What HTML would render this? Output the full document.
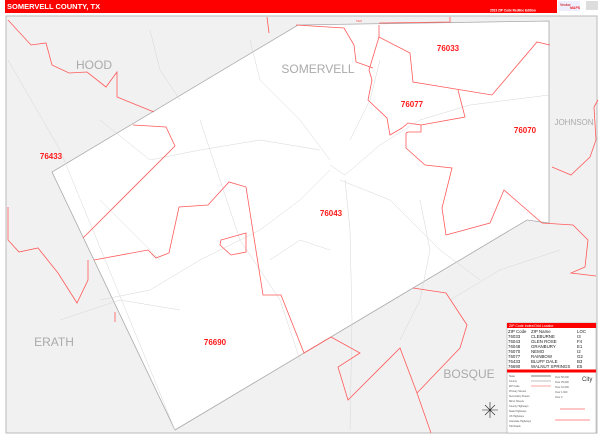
<!DOCTYPE html>
<html><head><meta charset="utf-8"><style>
html,body{margin:0;padding:0;width:600px;height:435px;overflow:hidden;background:#fff;font-family:"Liberation Sans",sans-serif}
svg{position:absolute;left:0;top:0}
</style></head><body>
<svg width="600" height="435" viewBox="0 0 600 435" xmlns="http://www.w3.org/2000/svg" font-family="Liberation Sans, sans-serif">
<rect x="0" y="0" width="600" height="435" fill="#fff"/>
<rect x="5" y="0" width="552" height="13" fill="#ff0000"/>
<text x="7" y="9" font-size="7.5" font-weight="bold" fill="#fff">SOMERVELL COUNTY, TX</text>
<text x="490" y="11.5" font-size="3.2" font-weight="bold" fill="#fff">2023 ZIP Code Redline Edition</text>
<rect x="558" y="1" width="22" height="10" fill="#eef"/>
<text x="560" y="6" font-size="3.5" fill="#c33" font-weight="bold">Vector</text>
<text x="570" y="9" font-size="3.5" fill="#e22" font-weight="bold">MAPS</text>
<rect x="586" y="1" width="12" height="9" fill="#ddd"/>
<rect x="6" y="16" width="591" height="417" fill="#f1f1f1" stroke="#bbb" stroke-width="1"/>
<polygon points="298,25 549,21 549,223 527,220 175,430 52,172" fill="#fff" stroke="#aaa" stroke-width="0.8"/>
<g stroke="#d6d6d6" stroke-width="0.5" fill="none">
<path d="M330,165 L345,175 L380,145 L420,120 L470,105 L549,95"/>
<path d="M345,180 L350,230 L352,320 L350,430"/>
<path d="M8,60 L60,150 L175,430"/>
<path d="M100,120 L150,160 L200,150 L260,140 L320,150"/>
<path d="M330,170 L300,200 L260,230 L200,260 L150,290 L100,300"/>
<path d="M340,180 L390,200 L440,250 L480,280"/>
<path d="M250,40 L260,80 L300,120 L330,160"/>
<path d="M200,120 L220,180 L240,240 L280,300 L300,360"/>
<path d="M380,60 L370,100 L350,140"/>
<path d="M420,200 L430,250 L420,300 L400,340"/>
<path d="M60,320 L120,300 L180,310"/>
<path d="M450,300 L500,270 L560,250"/>
<path d="M150,30 L160,70 L180,100"/>
<path d="M270,260 L300,240 L330,250"/>
<path d="M100,200 L130,230 L160,260"/>
</g>
<g stroke="#ff5a5a" stroke-width="0.8" fill="none">
<polyline points="8,20 31,45 46,43 52,65 69,73 87,72 106,87 117,72 117,97 154,112"/>
<polyline points="133,125 166,127 175,146 83,238"/>
<polyline points="94,260 148,250 156,258 169,253 179,207 208,205 229,182 246,187 263,295 281,295 304,353 331,337"/>
<polygon points="221,240 246,233 246,252 231,255 220,245"/>
<polyline points="406,133 406,148 425,165 452,168 442,208 446,235 490,223 504,190 542,223"/>
<polyline points="379,25 379,37 369,70 372,80 368,100 387,118 390,135 402,128 408,123 421,125 421,132 408,132 406,133"/>
<polyline points="458,90 465,117 421,125"/>
<polyline points="379,37 410,53 413,82 492,95 537,42 550,45"/>
<polyline points="267,17 269,33"/>
<polyline points="296,25 344,28 354,45 356,62 373,68"/>
<polyline points="379,23 450,22 450,17"/>
<polyline points="598,100 594,107 596,140 590,157 571,175 552,167"/>
<polyline points="542,223 573,225 588,240 585,267 571,273 596,276"/>
<polyline points="8,207 8,240 19,252 38,248 58,273 77,303 88,280 88,260"/>
<polyline points="115,312 115,322"/>
<polyline points="413,288 446,293 467,325 460,348 417,393"/>
<polyline points="331,337 360,353 338,367 348,400 400,348 417,393 431,433"/>
</g>
<g fill="#aaa" font-size="12">
<text x="94" y="69" text-anchor="middle">HOOD</text>
<text x="318" y="73" text-anchor="middle">SOMERVELL</text>
<text x="54" y="346" text-anchor="middle">ERATH</text>
<text x="469" y="378" text-anchor="middle">BOSQUE</text>
<text x="574" y="125" text-anchor="middle" font-size="8">JOHNSON</text>
</g>
<g fill="#ff1a1a" font-size="8" font-weight="bold" text-anchor="middle">
<text x="448" y="51">76033</text>
<text x="412" y="107">76077</text>
<text x="525" y="133">76070</text>
<text x="51" y="159">76433</text>
<text x="331" y="216">76043</text>
<text x="215" y="345">76690</text>
</g>
<text x="356" y="22" font-size="3" fill="#f33">TAN</text>
<g stroke="#222" stroke-width="0.6">
<path d="M490,402 L490,418 M482,410 L498,410 M485,405 L495,415 M495,405 L485,415"/>
</g>
<rect x="507" y="323" width="89" height="110" fill="#fff" stroke="#999" stroke-width="0.5"/>
<rect x="507" y="323" width="89" height="5" fill="#ff0000"/>
<text x="509" y="327" font-size="3.5" fill="#fff">ZIP Code Index/Grid Locator</text>
<g font-size="4.4" fill="#222">
<text x="508" y="333">ZIP Code</text><text x="531" y="333">ZIP Name</text><text x="577" y="333">LOC</text>
<text x="508" y="338">76033</text><text x="531" y="338">CLEBURNE</text><text x="577" y="338">I3</text>
<text x="508" y="343">76043</text><text x="531" y="343">GLEN ROSE</text><text x="577" y="343">F4</text>
<text x="508" y="348">76048</text><text x="531" y="348">GRANBURY</text><text x="577" y="348">E1</text>
<text x="508" y="353">76070</text><text x="531" y="353">NEMO</text><text x="577" y="353">I2</text>
<text x="508" y="358">76077</text><text x="531" y="358">RAINBOW</text><text x="577" y="358">G2</text>
<text x="508" y="363">76433</text><text x="531" y="363">BLUFF DALE</text><text x="577" y="363">B3</text>
<text x="508" y="368">76690</text><text x="531" y="368">WALNUT SPRINGS</text><text x="577" y="368">E5</text>
</g>
<rect x="507" y="369.5" width="89" height="3" fill="#ff0000"/>
<g font-size="2.5" fill="#555">
<text x="509" y="377">State</text><text x="509" y="382">County</text><text x="509" y="387">ZIP Code</text>
<text x="509" y="392">Primary Streets</text><text x="509" y="397">Secondary Streets</text><text x="509" y="402">Minor Streets</text>
<text x="509" y="407">County Highways</text><text x="509" y="412">State Highways</text><text x="509" y="417">US Highways</text>
<text x="509" y="422">Interstate Highways</text><text x="509" y="427">Toll Roads</text>
<text x="555" y="378">Over 50,000</text><text x="555" y="383">Over 25,000</text><text x="555" y="388">Over 10,000</text>
<text x="555" y="393">Over 1,000</text><text x="555" y="398">Over 0</text>
</g>
<g stroke-width="0.7">
<line x1="531" y1="376" x2="551" y2="376" stroke="#555"/>
<line x1="531" y1="381" x2="551" y2="381" stroke="#aaa"/>
<line x1="531" y1="386" x2="551" y2="386" stroke="#f88"/>
<line x1="560" y1="409" x2="585" y2="409" stroke="#f66"/>
<line x1="555" y1="420" x2="590" y2="420" stroke="#f66"/>
</g>
<text x="582" y="381" font-size="6" fill="#333">City</text>
</svg>
</body></html>
